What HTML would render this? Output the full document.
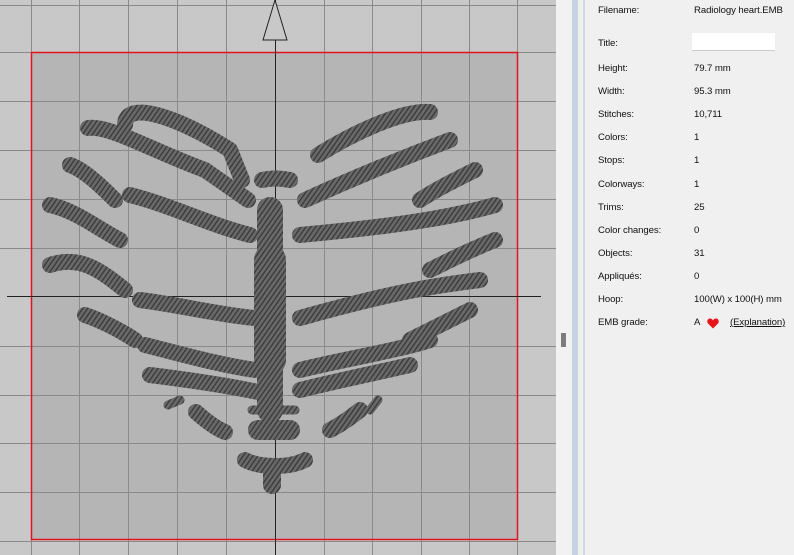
<!DOCTYPE html>
<html><head><style>
body{margin:0;width:794px;height:555px;overflow:hidden;background:#f0f0f0;font-family:"Liberation Sans",sans-serif;position:relative}
.l{position:absolute;left:598px;font-size:9.6px;color:#111;letter-spacing:-0.1px}
.v{position:absolute;left:694px;font-size:9.6px;color:#111;letter-spacing:-0.1px}
</style></head><body>
<svg width="556" height="555" style="position:absolute;left:0;top:0">
<defs>
<pattern id="st" width="4" height="4" patternUnits="userSpaceOnUse" patternTransform="rotate(35)">
<rect width="4" height="4" fill="#6a6a6a"/><rect width="1.5" height="4" fill="#3e3e3e"/>
</pattern>
</defs>
<rect width="556" height="555" fill="#c8c8c8"/>
<rect x="31" y="52" width="486" height="487" fill="#b5b5b5"/>
<g stroke="#8a8a8a" stroke-width="1">
<path d="M31.5 0V555M79.5 0V555M128.5 0V555M177.5 0V555M226.5 0V555M324.5 0V555M372.5 0V555M421.5 0V555M469.5 0V555M517.5 0V555"/>
<path d="M0 5.5H556M0 52.5H556M0 101.5H556M0 150.5H556M0 199.5H556M0 248.5H556M0 346.5H556M0 395.5H556M0 443.5H556M0 492.5H556M0 541.5H556"/>
</g>
<rect x="31.5" y="52.5" width="486" height="487" fill="none" stroke="#e0141e" stroke-width="1.5"/>
<path d="M7 296.5H541M275.5 0V555" stroke="#222" stroke-width="1"/>
<path d="M275 0L263 40H287Z" fill="#c8c8c8" stroke="#222" stroke-width="1"/>
<g fill="none" stroke="url(#st)" stroke-linecap="round" stroke-linejoin="round">
<g stroke-width="16">
<path d="M125 125C125 100 175 115 230 150L242 180"/>
<path d="M88 128C110 125 150 150 205 170L248 200"/>
<path d="M70 165C85 170 105 190 115 200"/>
<path d="M130 195C170 205 210 225 250 235"/>
<path d="M50 205C75 210 100 230 120 240"/>
<path d="M50 265C80 255 100 270 125 290"/>
<path d="M140 300C180 305 220 315 255 318"/>
<path d="M85 315C100 320 120 330 135 340"/>
<path d="M145 345C185 355 220 365 255 370"/>
<path d="M150 375C190 380 225 385 258 392"/>
<path d="M196 412C205 420 215 428 225 432"/>
<path d="M262 180C270 178 280 178 290 180"/>
<path d="M430 112C400 110 350 135 318 155"/>
<path d="M450 140C410 155 360 175 305 200"/>
<path d="M475 170C455 180 435 190 420 200"/>
<path d="M495 205C460 215 410 225 300 235"/>
<path d="M495 240C470 250 450 260 430 270"/>
<path d="M480 280C440 285 400 290 300 318"/>
<path d="M470 310C450 320 430 330 410 340"/>
<path d="M430 340C400 350 340 360 300 370"/>
<path d="M410 365C380 372 340 380 300 390"/>
<path d="M360 410C350 418 340 425 330 430"/>
<path d="M245 460C260 468 290 468 305 460"/>
</g>
<path d="M270 210L270 410" stroke-width="26"/>
<path d="M270 260L270 360" stroke-width="32"/>
<path d="M258 430L290 430" stroke-width="20"/>
<path d="M272 470L272 485" stroke-width="18"/>
<g stroke-width="9"><path d="M168 405L180 400M378 400L370 410M252 410L295 410"/></g>
</g>
</svg>
<div style="position:absolute;left:556px;top:0;width:16px;height:555px;background:#f2f2f2"></div>
<div style="position:absolute;left:561px;top:333px;width:5px;height:14px;background:#7d7d7d"></div>
<div style="position:absolute;left:572px;top:0;width:6px;height:555px;background:#c5d3e3"></div>
<div style="position:absolute;left:578px;top:0;width:5px;height:555px;background:#eef0ea"></div>
<div style="position:absolute;left:583px;top:0;width:2px;height:555px;background:#cfd8ea"></div>
<div class="l" style="top:5px">Filename:</div><div class="v" style="top:5px">Radiology heart.EMB</div>
<div class="l" style="top:38px">Title:</div>
<div style="position:absolute;left:692px;top:33px;width:83px;height:17px;background:#fff;border-bottom:1px solid #ccc"></div>
<div class="l" style="top:63px">Height:</div><div class="v" style="top:63px">79.7 mm</div>
<div class="l" style="top:86px">Width:</div><div class="v" style="top:86px">95.3 mm</div>
<div class="l" style="top:109px">Stitches:</div><div class="v" style="top:109px">10,711</div>
<div class="l" style="top:132px">Colors:</div><div class="v" style="top:132px">1</div>
<div class="l" style="top:155px">Stops:</div><div class="v" style="top:155px">1</div>
<div class="l" style="top:179px">Colorways:</div><div class="v" style="top:179px">1</div>
<div class="l" style="top:202px">Trims:</div><div class="v" style="top:202px">25</div>
<div class="l" style="top:225px">Color changes:</div><div class="v" style="top:225px">0</div>
<div class="l" style="top:248px">Objects:</div><div class="v" style="top:248px">31</div>
<div class="l" style="top:271px">Appliqués:</div><div class="v" style="top:271px">0</div>
<div class="l" style="top:294px">Hoop:</div><div class="v" style="top:294px">100(W) x 100(H) mm</div>
<div class="l" style="top:317px">EMB grade:</div><div class="v" style="top:317px">A</div>
<svg style="position:absolute;left:707px;top:318px" width="12" height="11" viewBox="0 0 12 11"><path d="M6 10.5L1 5.5C-0.5 3.5 0.5 0.5 3 0.5C4.5 0.5 5.5 1.5 6 2.5C6.5 1.5 7.5 0.5 9 0.5C11.5 0.5 12.5 3.5 11 5.5Z" fill="#e8141c"/></svg>
<div class="v" style="top:317px;left:730px;text-decoration:underline">(Explanation)</div>
</body></html>
